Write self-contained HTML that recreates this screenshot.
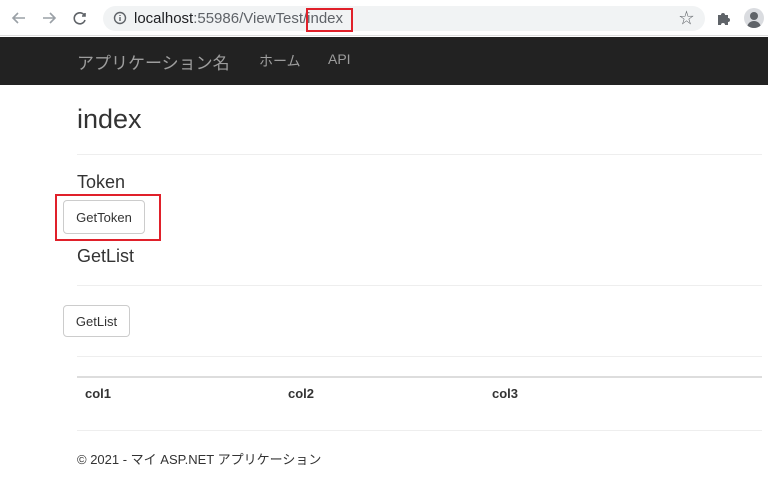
<!DOCTYPE html>
<html><head><meta charset="utf-8"><style>
*{margin:0;padding:0;box-sizing:border-box}
body{width:768px;height:486px;overflow:hidden;background:#fff;font-family:"Liberation Sans","Noto Sans CJK JP",sans-serif;color:#333;position:relative}
.a{position:absolute}
.hr{position:absolute;left:77px;width:685px;height:1px;background:#eee}
.btn{position:absolute;border:1px solid #ccc;border-radius:4px;background:#fff;font-size:13px;color:#333;display:flex;align-items:center;justify-content:center}
.red{position:absolute;border:2px solid #e0202a}
</style></head><body>
<div class="a" style="left:0;top:0;width:768px;height:36px;background:#fff;border-bottom:1px solid #ddd"></div>
<svg class="a" style="left:10px;top:10px" width="80" height="16" viewBox="0 0 80 16" fill="none" stroke="#9aa0a6" stroke-width="1.6">
<path d="M15 8H3M8 3L3 8l5 5"/><path d="M33 8h12M40 3l5 5-5 5"/><path stroke="#5f6368" d="M74.5 5.5A5.5 5.5 0 1 0 75 10M75 3v3h-3"/></svg>
<div class="a" style="left:103px;top:6px;width:602px;height:25px;border-radius:13px;background:#f1f3f4"></div>
<svg class="a" style="left:113px;top:11px" width="14" height="14" viewBox="0 0 14 14"><circle cx="7" cy="7" r="5.5" fill="none" stroke="#5f6368" stroke-width="1.4"/><path d="M7 6v4M7 4v1" stroke="#5f6368" stroke-width="1.4"/></svg>
<div class="a" style="left:134px;top:10px;font-size:15px;color:#202124">localhost<span style="color:#5f6368">:55986/ViewTest/index</span></div>
<div class="red" style="left:306px;top:8px;width:47px;height:24px"></div>
<div class="a" style="left:679px;top:7px;font-size:15px;color:#5f6368">☆</div>
<svg class="a" style="left:716px;top:10px" width="16" height="16" viewBox="0 0 16 16"><path d="M2 5h3a2 2 0 1 1 4 0h3v3a2 2 0 1 1 0 4v3H9a2 2 0 1 0-4 0H2z" fill="#5f6368"/></svg>
<div class="a" style="left:744px;top:8px;width:20px;height:20px;border-radius:50%;background:#dadce0;overflow:hidden"><div class="a" style="left:6px;top:4px;width:8px;height:8px;border-radius:50%;background:#5f6368"></div><div class="a" style="left:3px;top:13px;width:14px;height:10px;border-radius:7px 7px 0 0;background:#5f6368"></div></div>
<div class="a" style="left:0;top:37px;width:768px;height:48px;background:#222"></div>
<div class="a" style="left:77px;top:49px;font-size:17px;color:#9d9d9d">アプリケーション名</div>
<div class="a" style="left:259px;top:51px;font-size:14px;color:#9d9d9d">ホーム</div>
<div class="a" style="left:328px;top:51px;font-size:14px;color:#9d9d9d">API</div>
<div class="a" style="left:77px;top:104px;font-size:27px">index</div>
<div class="hr" style="top:154px"></div>
<div class="a" style="left:77px;top:172px;font-size:18px">Token</div>
<div class="btn" style="left:63px;top:200px;width:82px;height:34px">GetToken</div>
<div class="red" style="left:55px;top:194px;width:106px;height:47px"></div>
<div class="a" style="left:77px;top:246px;font-size:18px">GetList</div>
<div class="hr" style="top:285px"></div>
<div class="btn" style="left:63px;top:305px;width:67px;height:32px">GetList</div>
<div class="hr" style="top:356px"></div>
<div class="hr" style="top:376px;height:2px;background:#ddd"></div>
<div class="a" style="left:85px;top:386px;font-size:13px;font-weight:bold">col1</div>
<div class="a" style="left:288px;top:386px;font-size:13px;font-weight:bold">col2</div>
<div class="a" style="left:492px;top:386px;font-size:13px;font-weight:bold">col3</div>
<div class="hr" style="top:430px"></div>
<div class="a" style="left:77px;top:449px;font-size:13px">© 2021 - マイ ASP.NET アプリケーション</div>
</body></html>
